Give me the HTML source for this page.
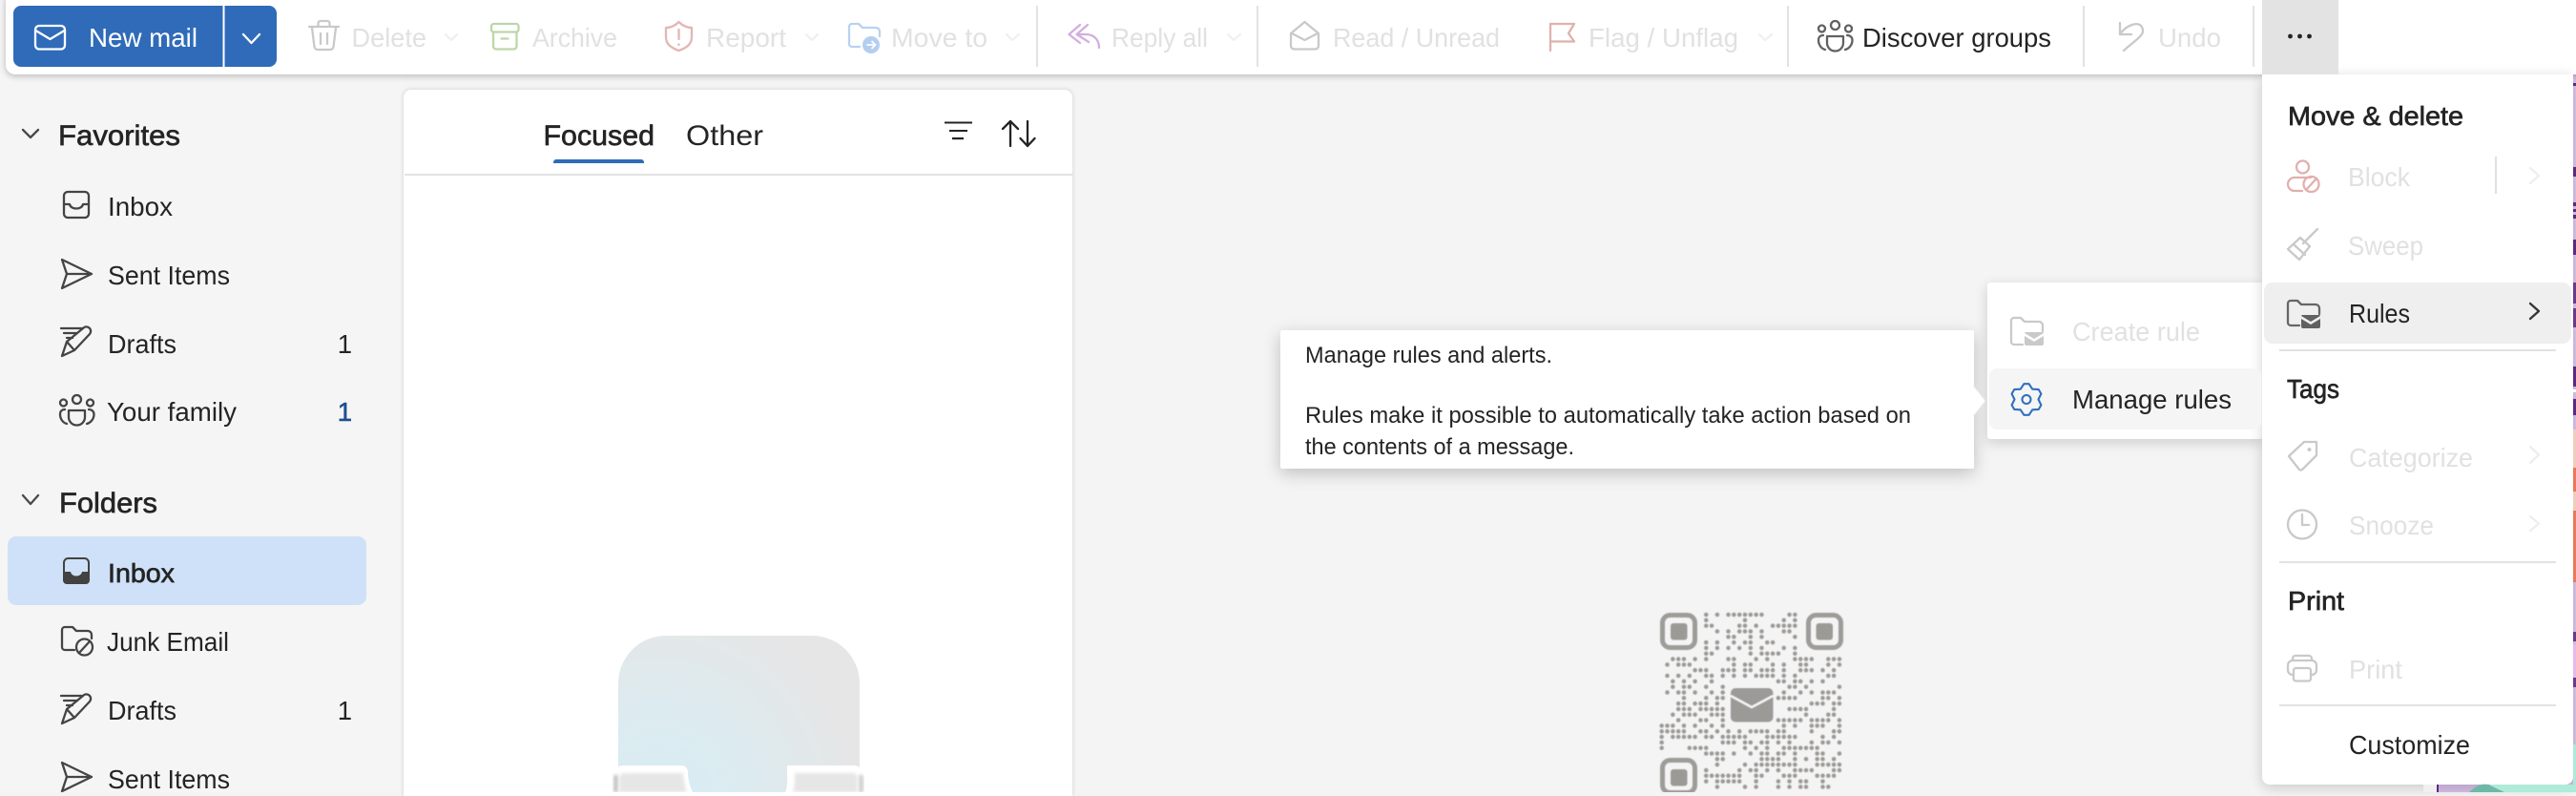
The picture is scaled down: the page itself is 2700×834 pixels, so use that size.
<!DOCTYPE html>
<html>
<head>
<meta charset="utf-8">
<style>
html,body{margin:0;padding:0;width:2700px;height:830px;overflow:hidden;background:#f4f4f4}
.b{position:absolute}
svg{position:absolute;left:0;top:0}
text{font-family:"Liberation Sans",sans-serif;font-size:27.5px;fill:#242424}
.d{fill:#e1e1e1}
.h{stroke:#242424;stroke-width:.65px}
.s{font-size:24px}
.ic{fill:none;stroke-width:2.3;stroke-linecap:round;stroke-linejoin:round}
</style>
</head>
<body>
<div class="b" style="left:0;top:78px;width:422px;height:752px;background:#f5f5f5"></div>
<div class="b" style="left:2554px;top:780px;width:146px;height:50px;background:#d6bfe8"></div>
<div class="b" style="left:2697px;top:78px;width:3px;height:752px;background:#dcc8ec"></div>
<div class="b" style="left:423px;top:94px;width:701px;height:740px;background:#fff;border-radius:8px 8px 0 0;box-shadow:0 0 5px rgba(0,0,0,.16)"></div>
<div class="b" style="left:6px;top:-10px;width:2710px;height:88px;background:#fff;border-radius:10px;box-shadow:0 2px 7px rgba(0,0,0,.24)"></div>
<div class="b" style="left:1342px;top:346px;width:727px;height:145px;background:#fff;border-radius:2px;box-shadow:0 5px 18px rgba(0,0,0,.22)"></div>
<div class="b" style="left:2083px;top:296px;width:289px;height:164px;background:#fff;border-radius:3px;box-shadow:0 4px 14px rgba(0,0,0,.16)"></div>
<div class="b" style="left:2371px;top:78px;width:326px;height:744px;background:#fff;border-radius:0 0 8px 8px;box-shadow:0 3px 14px rgba(0,0,0,.18)"></div>

<svg width="2700" height="830" viewBox="0 0 2700 830" xmlns="http://www.w3.org/2000/svg">
<defs>
<radialGradient id="g" gradientUnits="userSpaceOnUse" cx="690" cy="840" r="210">
<stop offset="0" stop-color="#d8edf5"/><stop offset=".45" stop-color="#dcebf0"/><stop offset="1" stop-color="#e6e6e6"/>
</radialGradient>
<filter id="bl" x="-5%" y="-5%" width="110%" height="110%"><feGaussianBlur stdDeviation=".55"/></filter>
<filter id="bt" x="-20%" y="-20%" width="140%" height="140%"><feGaussianBlur stdDeviation="1.6"/></filter>
</defs>

<!-- right-hand background fragments -->
<g>
<rect x="2697" y="87" width="3" height="3" fill="#5e2a7e"/>
<rect x="2697" y="175" width="3" height="10" fill="#5e2a7e"/>
<rect x="2697" y="212" width="3" height="4" fill="#5e2a7e"/><rect x="2697" y="219" width="3" height="3" fill="#5e2a7e"/><rect x="2697" y="225" width="3" height="4" fill="#5e2a7e"/>
<rect x="2697" y="251" width="3" height="16" fill="#5e2a7e"/>
<rect x="2697" y="296" width="3" height="22" fill="#6b3a8a"/>
<rect x="2697" y="323" width="3" height="20" fill="#6b3a8a"/>
<rect x="2697" y="384" width="3" height="21" fill="#5e2a7e"/>
<rect x="2697" y="408" width="3" height="3" fill="#fff"/>
<rect x="2697" y="418" width="3" height="17" fill="#5e2a7e"/>
<rect x="2697" y="450" width="3" height="160" fill="#e8795a"/>
<rect x="2697" y="450" width="3" height="40" fill="#f1cdbd"/>
<rect x="2697" y="515" width="3" height="20" fill="#f1cdbd"/>
<rect x="2697" y="662" width="3" height="10" fill="#6b3a8a"/>
<rect x="2697" y="675" width="3" height="35" fill="#e8b8ea"/>
<rect x="2697" y="710" width="3" height="10" fill="#6b3a8a"/>
<rect x="2697" y="780" width="3" height="50" fill="#aee8d8"/>
<rect x="2554" y="822" width="2" height="8" fill="#5e2a7e"/>
<rect x="2610" y="822" width="90" height="8" fill="#b0ead9"/>
<path d="M2588 830 Q2598 820 2608 822 L2625 830Z" fill="#6fb8a8"/>
<rect x="2540" y="822" width="14" height="8" fill="#f0f0f0"/>
</g>

<!-- toolbar -->
<rect x="14" y="6" width="276" height="64" rx="8" fill="#2f6bb8"/>
<rect x="233.500" y="6" width="2" height="64" fill="#fff"/>
<g class="ic" stroke="#fff" stroke-width="2.2"><rect x="37" y="27" width="31" height="24.500" rx="4"/><path d="M37.500 32 L52.500 41 L67.500 32"/><path d="M255 36 L263.500 45 L272 36"/></g>
<text x="93" y="49" textLength="114" lengthAdjust="spacingAndGlyphs" style="fill:#fff">New mail</text>

<rect x="2371" y="0" width="80" height="78" fill="#e3e3e3"/>
<g fill="#e2e2e2">
<rect x="1086" y="6" width="2" height="64"/><rect x="1317" y="6" width="2" height="64"/><rect x="1873" y="6" width="2" height="64"/><rect x="2183" y="6" width="2" height="64"/><rect x="2361" y="6" width="2" height="64"/>
</g>
<!-- trash -->
<g class="ic" stroke="#c9c9c9"><path d="M324 28H355M333.500 27V24.500a2.500 2.500 0 0 1 2.500-2.500h7a2.500 2.500 0 0 1 2.500 2.500V27M327 29L329.500 49a3.500 3.500 0 0 0 3.500 3h13a3.500 3.500 0 0 0 3.500-3L352 29M336 35V46M343 35V46"/></g>
<text class="d" x="368.500" y="49" textLength="78.500" lengthAdjust="spacingAndGlyphs">Delete</text>
<!-- archive -->
<g class="ic" stroke="#bcd7a8"><rect x="515" y="25" width="28.500" height="8.500" rx="2.500"/><path d="M517 34V48.500a3 3 0 0 0 3 3h18.500a3 3 0 0 0 3-3V34M525.500 40.500H532.500"/></g>
<text class="d" x="558" y="49" textLength="89" lengthAdjust="spacingAndGlyphs">Archive</text>
<!-- report -->
<g class="ic" stroke="#e2b7b4"><path d="M711.500 23C707.500 27 702.500 29 698 29V39C698 46 703 50 711.500 53C720 50 725 46 725 39V29C720.500 29 715.500 27 711.500 23Z"/><path d="M711.500 31V41M711.500 46.500V47"/></g>
<text class="d" x="740" y="49" textLength="84" lengthAdjust="spacingAndGlyphs">Report</text>
<!-- move -->
<g class="ic" stroke="#b7d2f0"><path d="M890 46V28a3 3 0 0 1 3-3h7l4 4h14a4 4 0 0 1 4 4v5M890 46a3 3 0 0 0 3 3h8"/></g>
<circle cx="913" cy="47" r="9" fill="#b3cef1"/>
<path d="M908.500 47H917M913.500 43L917.500 47L913.500 51" fill="none" stroke="#fff" stroke-width="1.800"/>
<text class="d" x="934" y="49" textLength="101" lengthAdjust="spacingAndGlyphs">Move to</text>
<!-- reply all -->
<g class="ic" stroke="#d3aede"><path d="M1132 26L1120.500 36L1132 45M1140 26L1128.500 36L1141 44M1128.500 36H1138C1147 36 1152 42 1152 50"/></g>
<text class="d" x="1165" y="49" textLength="101" lengthAdjust="spacingAndGlyphs">Reply all</text>
<!-- read -->
<g class="ic" stroke="#c9c9c9"><path d="M1353 35L1367.500 23L1382 35V48a3.500 3.500 0 0 1-3.500 3.500H1356.500a3.500 3.500 0 0 1-3.500-3.500ZM1354 35L1367.500 42L1381 35"/></g>
<text class="d" x="1397" y="49" textLength="175" lengthAdjust="spacingAndGlyphs">Read / Unread</text>
<!-- flag -->
<g class="ic" stroke="#e0b1ad"><path d="M1625 53V25H1650L1644 35L1650 43.500H1625"/></g>
<text class="d" x="1665" y="49" textLength="157" lengthAdjust="spacingAndGlyphs">Flag / Unflag</text>
<!-- chevrons -->
<g class="ic" stroke="#f0f0f0" stroke-width="1.800">
<path d="M467 36L473 42L479 36M845 36L851 42L857 36M1055 36L1061 42L1068 36M1287 36L1293 42L1300 36M1844 36L1850 42L1857 36"/>
</g>
<!-- groups -->
<g class="ic" stroke="#616161" stroke-width="2">
<circle cx="1909.500" cy="30" r="3.500"/><circle cx="1923.500" cy="26.500" r="4.500"/><circle cx="1937.500" cy="30" r="3.500"/>
<path d="M1915 38H1932V45a8.500 8.500 0 0 1-17 0ZM1911 37C1908 37 1906 39 1906 42C1906 47 1909 51 1913 52M1936 37C1939 37 1941.500 39 1941.500 42C1941.500 47 1938 51 1934 52"/>
</g>
<text x="1952" y="49" textLength="198" lengthAdjust="spacingAndGlyphs">Discover groups</text>
<!-- undo -->
<g class="ic" stroke="#c9c9c9"><path d="M2222 24V36H2234M2222 36C2228 26 2246 19 2246 33C2246 38 2232 47 2226 53"/></g>
<text class="d" x="2262" y="49" textLength="66" lengthAdjust="spacingAndGlyphs">Undo</text>
<g fill="#242424"><circle cx="2400.500" cy="38" r="2.400"/><circle cx="2410.500" cy="38" r="2.400"/><circle cx="2420.500" cy="38" r="2.400"/></g>

<!-- sidebar -->
<g class="ic" stroke="#4a4a4a" stroke-width="1.700"><path d="M24 136L32 144L40 136M24 519L32 528L40 519"/></g>
<text class="h" x="61" y="152" textLength="128" lengthAdjust="spacingAndGlyphs" style="font-size:30px">Favorites</text>
<text class="h" x="62" y="537" textLength="103" lengthAdjust="spacingAndGlyphs" style="font-size:30px">Folders</text>
<rect x="8" y="562" width="376" height="72" rx="9" fill="#cfe1f8"/>
<g class="ic" stroke="#444" stroke-width="2">
<rect x="67" y="201" width="26" height="27" rx="4"/><path d="M67 214H73C74 220 86 220 87 214H93"/>
<path d="M65 272L96 287L65 302L70 287ZM70 287H96"/>
<path d="M65 799L96 814L65 829L70 814ZM70 814H96"/>
<path d="M64 344H86M67 349H81M70 354H76M65 373L70 358L87 344a4.500 4.500 0 0 1 7 6L78 367ZM70 358L78 367"/>
<path transform="translate(0,385)" d="M64 344H86M67 349H81M70 354H76M65 373L70 358L87 344a4.500 4.500 0 0 1 7 6L78 367ZM70 358L78 367"/>
<path d="M65 678V660a3 3 0 0 1 3-3h8l4 4h12a4 4 0 0 1 4 4v4M65 678a3 3 0 0 0 3 3h10"/>
<circle cx="88.500" cy="678" r="8.500"/><path d="M83 684L94 672"/>
</g>
<g transform="translate(-1843,392)" class="ic" stroke="#444" stroke-width="2">
<circle cx="1909.500" cy="30" r="3.500"/><circle cx="1923.500" cy="26.500" r="4.500"/><circle cx="1937.500" cy="30" r="3.500"/>
<path d="M1915 38H1932V45a8.500 8.500 0 0 1-17 0ZM1911 37C1908 37 1906 39 1906 42C1906 47 1909 51 1913 52M1936 37C1939 37 1941.500 39 1941.500 42C1941.500 47 1938 51 1934 52"/>
</g>
<rect x="67" y="585" width="26" height="26" rx="4.500" fill="none" stroke="#424242" stroke-width="2"/>
<path d="M66 599H74C75 605 85 605 86 599H94V608a4 4 0 0 1-4 4H70a4 4 0 0 1-4-4Z" fill="#424242"/>

<text x="113" y="226" textLength="68" lengthAdjust="spacingAndGlyphs">Inbox</text>
<text x="113" y="298" textLength="128" lengthAdjust="spacingAndGlyphs">Sent Items</text>
<text x="113" y="370" textLength="72" lengthAdjust="spacingAndGlyphs">Drafts</text>
<text x="369" y="370" text-anchor="end">1</text>
<text x="112" y="441" textLength="136" lengthAdjust="spacingAndGlyphs">Your family</text>
<text x="369" y="441" text-anchor="end" style="fill:#1f4f8f;stroke:#1f4f8f;stroke-width:.6px">1</text>
<text class="h" x="113" y="610" textLength="70" lengthAdjust="spacingAndGlyphs">Inbox</text>
<text x="112" y="682" textLength="128" lengthAdjust="spacingAndGlyphs">Junk Email</text>
<text x="113" y="754" textLength="72" lengthAdjust="spacingAndGlyphs">Drafts</text>
<text x="369" y="754" text-anchor="end">1</text>
<text x="113" y="826" textLength="128" lengthAdjust="spacingAndGlyphs">Sent Items</text>

<!-- list pane -->
<rect x="424" y="182" width="700" height="2" fill="#e2e2e2"/>
<text class="h" x="569.500" y="152" textLength="116.500" lengthAdjust="spacingAndGlyphs" style="font-size:30px">Focused</text>
<text x="719" y="152" textLength="81" lengthAdjust="spacingAndGlyphs" style="font-size:30px">Other</text>
<path d="M580 171V170a3 3 0 0 1 3-3H672a3 3 0 0 1 3 3V171Z" fill="#2f6bb8"/>
<g fill="#242424"><rect x="990" y="127.500" width="29" height="2"/><rect x="995" y="136" width="19" height="2"/><rect x="998" y="144" width="12" height="2.200"/></g>
<g class="ic" stroke="#242424" stroke-width="2"><path d="M1059 153V127M1051 135L1059 127L1067 135M1077 127V153M1069.500 145L1077 153L1084.500 145"/></g>
<path d="M648 830V716a50 50 0 0 1 50-50H851a50 50 0 0 1 50 50V830Z" fill="url(#g)"/>
<path d="M643 830V812a10 10 0 0 1 10-10H714a7 7 0 0 1 7 7C721 817 723 824 726 830Z" fill="#fff"/>
<path d="M825 802H895a10 10 0 0 1 10 10V830H823C826 824 825 817 825 802Z" fill="#fff"/>
<rect x="643" y="812" width="5" height="18" fill="#c4c4c4" filter="url(#bt)"/>
<rect x="900" y="812" width="5" height="18" fill="#cfcfcf" filter="url(#bt)"/>
<path d="M649 830V815a5 5 0 0 1 5-5H716C717 818 718 825 720 830Z" fill="#e6e6e6" filter="url(#bt)"/>
<path d="M831 830C833 825 833 818 833 810H894a5 5 0 0 1 5 5V830Z" fill="#e6e6e6" filter="url(#bt)"/>

<!-- QR -->
<g filter="url(#bl)">
<g fill="none" stroke="#9e9c99" stroke-width="5">
<rect x="1742.500" y="644.500" width="34" height="34" rx="8"/>
<rect x="1895.500" y="644.500" width="34" height="34" rx="8"/>
<rect x="1742.500" y="796.500" width="34" height="34" rx="8"/>
</g>
<g fill="#9c9a97">
<rect x="1751" y="653" width="17.500" height="17.500" rx="3"/>
<rect x="1903.500" y="653" width="17.500" height="17.500" rx="3"/>
<rect x="1751" y="806" width="17.500" height="17.500" rx="3"/>
<rect x="1814" y="721" width="44.500" height="35.500" rx="5"/>
</g>
<path d="M1814 729L1836 741L1858.500 729" fill="none" stroke="#f4f4f4" stroke-width="2.500"/>
<path transform="translate(1741.700,644) scale(5.82)" fill="none" stroke="#9c9a97" stroke-width=".78" stroke-linecap="round" d="M8 0h0M10 0h0M12 0h0M13 0h0M14 0h0M15 0h0M16 0h0M17 0h0M18 0h0M23 0h0M24 0h0M8 1h0M15 1h0M22 1h0M24 1h0M8 2h0M9 2h0M14 2h0M15 2h0M17 2h0M20 2h0M21 2h0M22 2h0M23 2h0M24 2h0M10 3h0M12 3h0M14 3h0M15 3h0M16 3h0M18 3h0M22 3h0M23 3h0M12 4h0M13 4h0M16 4h0M18 4h0M24 4h0M8 5h0M10 5h0M13 5h0M15 5h0M16 5h0M19 5h0M20 5h0M8 6h0M10 6h0M12 6h0M14 6h0M16 6h0M18 6h0M22 6h0M24 6h0M8 7h0M9 7h0M16 7h0M18 7h0M19 7h0M20 7h0M21 7h0M24 7h0M2 8h0M3 8h0M4 8h0M6 8h0M8 8h0M12 8h0M13 8h0M17 8h0M19 8h0M24 8h0M25 8h0M26 8h0M27 8h0M30 8h0M31 8h0M32 8h0M1 9h0M3 9h0M4 9h0M5 9h0M13 9h0M15 9h0M16 9h0M20 9h0M22 9h0M25 9h0M26 9h0M30 9h0M32 9h0M6 10h0M7 10h0M8 10h0M11 10h0M12 10h0M13 10h0M15 10h0M16 10h0M18 10h0M19 10h0M20 10h0M22 10h0M25 10h0M26 10h0M27 10h0M29 10h0M31 10h0M1 11h0M3 11h0M5 11h0M8 11h0M9 11h0M11 11h0M13 11h0M15 11h0M17 11h0M18 11h0M19 11h0M20 11h0M22 11h0M24 11h0M30 11h0M31 11h0M2 12h0M4 12h0M6 12h0M9 12h0M21 12h0M22 12h0M24 12h0M25 12h0M27 12h0M29 12h0M2 13h0M4 13h0M5 13h0M8 13h0M11 13h0M23 13h0M24 13h0M26 13h0M32 13h0M1 14h0M3 14h0M4 14h0M6 14h0M9 14h0M11 14h0M22 14h0M25 14h0M27 14h0M29 14h0M30 14h0M31 14h0M4 15h0M8 15h0M10 15h0M11 15h0M21 15h0M22 15h0M23 15h0M24 15h0M29 15h0M30 15h0M32 15h0M3 16h0M4 16h0M6 16h0M7 16h0M8 16h0M10 16h0M27 16h0M28 16h0M29 16h0M31 16h0M32 16h0M3 17h0M4 17h0M5 17h0M7 17h0M8 17h0M9 17h0M10 17h0M11 17h0M23 17h0M24 17h0M25 17h0M26 17h0M31 17h0M2 18h0M4 18h0M5 18h0M6 18h0M9 18h0M10 18h0M11 18h0M26 18h0M30 18h0M31 18h0M3 19h0M7 19h0M8 19h0M11 19h0M21 19h0M22 19h0M23 19h0M24 19h0M25 19h0M27 19h0M28 19h0M29 19h0M30 19h0M32 19h0M0 20h0M1 20h0M2 20h0M4 20h0M6 20h0M9 20h0M11 20h0M22 20h0M24 20h0M27 20h0M28 20h0M29 20h0M32 20h0M0 21h0M1 21h0M2 21h0M3 21h0M4 21h0M7 21h0M8 21h0M10 21h0M12 21h0M14 21h0M16 21h0M17 21h0M18 21h0M19 21h0M21 21h0M22 21h0M27 21h0M31 21h0M32 21h0M0 22h0M2 22h0M3 22h0M4 22h0M5 22h0M6 22h0M8 22h0M9 22h0M11 22h0M12 22h0M13 22h0M14 22h0M15 22h0M19 22h0M20 22h0M21 22h0M22 22h0M23 22h0M24 22h0M29 22h0M31 22h0M0 23h0M11 23h0M12 23h0M13 23h0M15 23h0M16 23h0M18 23h0M19 23h0M21 23h0M23 23h0M27 23h0M29 23h0M30 23h0M32 23h0M0 24h0M5 24h0M6 24h0M7 24h0M8 24h0M15 24h0M17 24h0M19 24h0M22 24h0M23 24h0M24 24h0M25 24h0M26 24h0M27 24h0M28 24h0M8 25h0M9 25h0M10 25h0M11 25h0M13 25h0M16 25h0M18 25h0M19 25h0M21 25h0M22 25h0M24 25h0M28 25h0M29 25h0M32 25h0M10 26h0M11 26h0M18 26h0M19 26h0M20 26h0M21 26h0M24 26h0M26 26h0M28 26h0M29 26h0M31 26h0M10 27h0M15 27h0M17 27h0M18 27h0M19 27h0M20 27h0M21 27h0M22 27h0M23 27h0M24 27h0M28 27h0M29 27h0M30 27h0M31 27h0M32 27h0M8 28h0M14 28h0M16 28h0M17 28h0M19 28h0M21 28h0M24 28h0M25 28h0M26 28h0M27 28h0M31 28h0M32 28h0M8 29h0M9 29h0M10 29h0M11 29h0M12 29h0M13 29h0M14 29h0M17 29h0M18 29h0M22 29h0M23 29h0M24 29h0M28 29h0M29 29h0M30 29h0M31 29h0M8 30h0M10 30h0M11 30h0M12 30h0M13 30h0M14 30h0M17 30h0M21 30h0M23 30h0M25 30h0M26 30h0M29 30h0M10 31h0M15 31h0M17 31h0M21 31h0M23 31h0M25 31h0M26 31h0M29 31h0M30 31h0"/>
</g>

<!-- tooltip -->
<path d="M2068 404L2081 420L2068 436Z" fill="#fff"/>
<path d="M2068.500 404L2081 420L2068.500 436" fill="none" stroke="#e9e9e9" stroke-width="1"/>
<text class="s" x="1368" y="380" textLength="259" lengthAdjust="spacingAndGlyphs">Manage rules and alerts.</text>
<text class="s" x="1368" y="443" textLength="635" lengthAdjust="spacingAndGlyphs">Rules make it possible to automatically take action based on</text>
<text class="s" x="1368" y="476" textLength="282" lengthAdjust="spacingAndGlyphs">the contents of a message.</text>

<!-- submenu -->
<rect x="2085" y="386" width="285" height="64" rx="8" fill="#f5f5f5"/>
<g class="ic" stroke="#c9c9c9" stroke-width="2"><path d="M2108 358V336a3 3 0 0 1 3-3h7l4 4h15a4 4 0 0 1 4 4v6M2108 358a3 3 0 0 0 3 3h9"/></g>
<path d="M2123 348h18a2 2 0 0 1 1 1l-10 6-10-6a2 2 0 0 1 1-1ZM2122 352l10 6 10-6v8a2 2 0 0 1-2 2h-16a2 2 0 0 1-2-2Z" fill="#c9c9c9"/>
<text class="d" x="2172" y="357" textLength="134" lengthAdjust="spacingAndGlyphs">Create rule</text>
<g transform="translate(2124,418.500)" fill="none" stroke="#2f6fc0" stroke-width="2.100" stroke-linejoin="round">
<path d="M-2.600-16.300H2.600L6.250-10.800L12.800-10.400L15.400-5.900L12.500 0L15.400 5.900L12.800 10.400L6.250 10.800L2.600 16.300H-2.600L-6.250 10.800L-12.800 10.400L-15.400 5.900L-12.500 0L-15.400-5.900L-12.800-10.400L-6.250-10.800Z"/>
<circle r="4.500"/>
</g>
<text x="2172" y="428" textLength="167" lengthAdjust="spacingAndGlyphs">Manage rules</text>

<!-- overflow menu -->
<text class="h" x="2398" y="131" textLength="184" lengthAdjust="spacingAndGlyphs">Move &amp; delete</text>
<g class="ic" stroke="#e0b0ae" stroke-width="2"><circle cx="2413.500" cy="175" r="6.500"/><path d="M2422 186H2405a6.500 6.500 0 0 0 0 14H2413"/><circle cx="2422.500" cy="193" r="8"/><path d="M2417 199L2428 187"/></g>
<text class="d" x="2461" y="195" textLength="65" lengthAdjust="spacingAndGlyphs">Block</text>
<rect x="2615" y="164" width="2" height="39" fill="#e0e0e0"/>
<g class="ic" stroke="#eeeeee" stroke-width="1.800"><path d="M2652 176L2661 184L2652 192M2652 468L2661 476.500L2652 485M2652 541L2661 548.500L2652 556"/></g>
<g class="ic" stroke="#c9c9c9" stroke-width="2"><path d="M2429 240L2414 255M2398 261L2411 249L2421 258L2410 272ZM2404 256L2416 267"/></g>
<text class="d" x="2461" y="267" textLength="79" lengthAdjust="spacingAndGlyphs">Sweep</text>

<rect x="2373" y="296" width="322" height="64" rx="9" fill="#efefef"/>
<g class="ic" stroke="#666" stroke-width="2"><path d="M2398 338V318a3 3 0 0 1 3-3h7l4 4h15a4 4 0 0 1 4 4v6M2398 338a3 3 0 0 0 3 3h9"/></g>
<path d="M2413 330h18a2 2 0 0 1 1 1l-10 6-10-6a2 2 0 0 1 1-1ZM2412 334l10 6 10-6v8a2 2 0 0 1-2 2h-16a2 2 0 0 1-2-2Z" fill="#616161"/>
<text x="2462" y="338" textLength="64" lengthAdjust="spacingAndGlyphs">Rules</text>
<g class="ic" stroke="#333" stroke-width="2"><path d="M2652 318L2661 326L2652 334"/></g>
<rect x="2389" y="366" width="290" height="2" fill="#e2e2e2"/>
<text class="h" x="2397" y="417" textLength="55" lengthAdjust="spacingAndGlyphs">Tags</text>
<g class="ic" stroke="#c9c9c9" stroke-width="2"><path d="M2399 478L2415 463H2428V477L2413 492a2.500 2.500 0 0 1-3 0Z"/></g>
<circle cx="2420.500" cy="471" r="2" fill="#c9c9c9"/>
<text class="d" x="2462" y="489" textLength="130" lengthAdjust="spacingAndGlyphs">Categorize</text>
<g class="ic" stroke="#c9c9c9" stroke-width="2"><circle cx="2413" cy="549.500" r="15"/><path d="M2413 539V550H2420"/></g>
<text class="d" x="2462" y="560" textLength="89" lengthAdjust="spacingAndGlyphs">Snooze</text>
<rect x="2389" y="588" width="290" height="2" fill="#e2e2e2"/>
<text class="h" x="2398" y="639" textLength="59" lengthAdjust="spacingAndGlyphs">Print</text>
<g class="ic" stroke="#c9c9c9" stroke-width="2"><path d="M2403 692V690a3 3 0 0 1 3-3h14a3 3 0 0 1 3 3v2"/><rect x="2398" y="692" width="30" height="15" rx="5"/><rect x="2404" y="700" width="18" height="13.500" rx="2.500" fill="#fff"/></g>
<text class="d" x="2462" y="711" textLength="56" lengthAdjust="spacingAndGlyphs">Print</text>
<rect x="2389" y="738" width="290" height="2" fill="#e2e2e2"/>
<text x="2462" y="790" textLength="127" lengthAdjust="spacingAndGlyphs">Customize</text>
</svg>
</body>
</html>
